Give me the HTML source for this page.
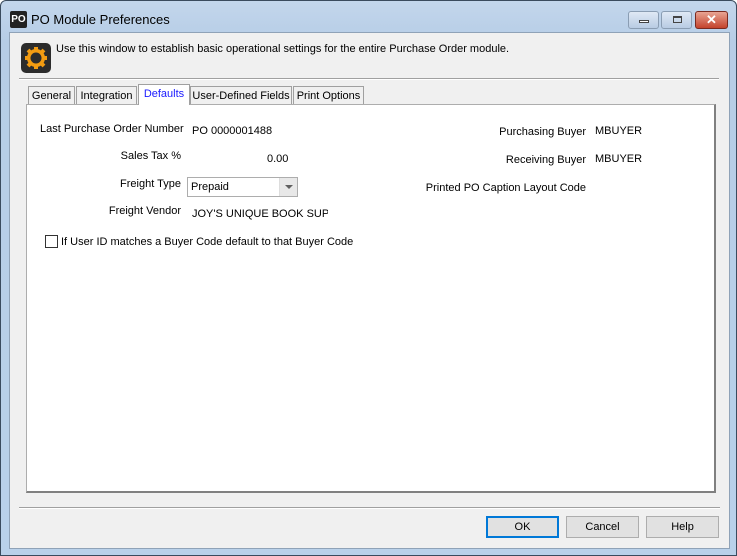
<!DOCTYPE html>
<html><head><style>
*{margin:0;padding:0;box-sizing:border-box}
body{width:737px;height:556px;overflow:hidden;font-family:"Liberation Sans",sans-serif;font-size:11px;color:#000;background:#fff}
.win{position:absolute;left:0;top:0;width:737px;height:556px;background:linear-gradient(#c3d6ec,#b6cde6 40px,#b9d1ea);border:1px solid #3a4b5e;border-radius:6px 6px 0 0}
.title{position:absolute;left:30px;top:11px;font-size:13px;color:#000}
.logo{position:absolute;left:9px;top:10px;width:17px;height:17px;background:#222;color:#fff;font-weight:bold;font-size:10px;line-height:17px;text-align:center;border-radius:2px}
.client{position:absolute;left:8px;top:31px;width:721px;height:517px;background:#f0f0f0;border:1px solid #8fa2b7}
.a{position:absolute;white-space:nowrap}
.tb{position:absolute;top:29px;height:24px;border:1px solid #8a9db3;border-radius:3px}
.tab{position:absolute;top:53px;height:19px;border:1px solid #a0a0a0;border-bottom:none;background:#f0f0f0;padding:3px 0 0;font-size:11px;white-space:nowrap;text-align:center;overflow:hidden}
.panel{position:absolute;left:16px;top:71px;width:690px;height:389px;background:#fff;border:1px solid #adadad;border-right:2px solid #808080;border-bottom:2px solid #808080}
.btn{position:absolute;top:483px;width:73px;height:22px;border:1px solid #adadad;background:#e1e1e1;text-align:center;line-height:20px}
.r{position:absolute;text-align:right;white-space:nowrap}
</style></head><body>
<div class="win">
<div class="logo">PO</div>
<div class="title">PO Module Preferences</div>
<div class="tb" style="left:627px;width:31px;top:10px;height:18px;background:linear-gradient(#dfe9f5,#b8cbe3)"><div class="a" style="left:10px;top:8px;width:10px;height:3px;border:1px solid #444;background:#fff"></div></div>
<div class="tb" style="left:660px;width:31px;top:10px;height:18px;background:linear-gradient(#dfe9f5,#b8cbe3)"><div class="a" style="left:11px;top:4px;width:9px;height:7px;border:1px solid #444;border-top-width:2px"></div></div>
<div class="tb" style="left:694px;width:33px;top:10px;height:18px;background:linear-gradient(#e8a493,#c4432c);border-color:#7a2a20;color:#fff;text-align:center;font-weight:bold;font-size:13px;line-height:16px">✕</div>
<div class="client">
<div class="a" style="left:11px;top:10px;width:30px;height:30px;background:#2c2c2c;border-radius:5px">
<svg width="30" height="30" viewBox="0 0 30 30"><g fill="#f39c12"><circle cx="15" cy="15" r="9"/><g stroke="#f39c12" stroke-width="4"><line x1="15" y1="4" x2="15" y2="26"/><line x1="4" y1="15" x2="26" y2="15"/><line x1="7" y1="7" x2="23" y2="23"/><line x1="23" y1="7" x2="7" y2="23"/></g></g><circle cx="15" cy="15" r="5.5" fill="#2c2c2c"/></svg></div>
<div class="a" style="left:46px;top:10px">Use this window to establish basic operational settings for the entire Purchase Order module.</div>
<div class="a" style="left:9px;top:45px;width:700px;border-top:1px solid #a0a0a0;border-bottom:1px solid #fff"></div>
<div class="tab" style="left:18px;width:47px">General</div>
<div class="tab" style="left:66px;width:61px">Integration</div>
<div class="tab" style="left:128px;width:52px;top:51px;height:21px;background:#fff;color:#1a1aff;z-index:2">Defaults</div>
<div class="tab" style="left:180px;width:102px">User-Defined Fields</div>
<div class="tab" style="left:283px;width:71px">Print Options</div>
<div class="panel"></div>
<div class="a" style="left:30px;top:90px">Last Purchase Order Number</div>
<div class="a" style="left:182px;top:92px">PO 0000001488</div>
<div class="r" style="left:60px;width:111px;top:117px">Sales Tax %</div>
<div class="a" style="left:257px;top:120px">0.00</div>
<div class="r" style="left:60px;width:111px;top:145px">Freight Type</div>
<div class="a" style="left:177px;top:144px;width:111px;height:20px;border:1px solid #adadad;background:#fff;padding:3px 3px">Prepaid<div class="a" style="right:0;top:0;width:18px;height:18px;background:#e8e8e8;border-left:1px solid #ddd"><div class="a" style="left:5px;top:7px;border:4px solid transparent;border-top:4px solid #606060"></div></div></div>
<div class="r" style="left:60px;width:111px;top:172px">Freight Vendor</div>
<div class="a" style="left:182px;top:175px;width:136px;overflow:hidden">JOY'S UNIQUE BOOK SUPPLY</div>
<div class="a" style="left:35px;top:202px;width:13px;height:13px;border:1px solid #333;background:#fff"></div>
<div class="a" style="left:51px;top:203px">If User ID matches a Buyer Code default to that Buyer Code</div>
<div class="r" style="left:400px;width:176px;top:93px">Purchasing Buyer</div>
<div class="a" style="left:585px;top:92px">MBUYER</div>
<div class="r" style="left:400px;width:176px;top:121px">Receiving Buyer</div>
<div class="a" style="left:585px;top:120px">MBUYER</div>
<div class="r" style="left:400px;width:176px;top:149px">Printed PO Caption Layout Code</div>
<div class="a" style="left:9px;top:474px;width:701px;border-top:1px solid #a0a0a0;border-bottom:1px solid #fff"></div>
<div class="btn" style="left:476px;border:2px solid #0078d7;line-height:18px">OK</div>
<div class="btn" style="left:556px">Cancel</div>
<div class="btn" style="left:636px">Help</div>
</div>
</div>
</body></html>
